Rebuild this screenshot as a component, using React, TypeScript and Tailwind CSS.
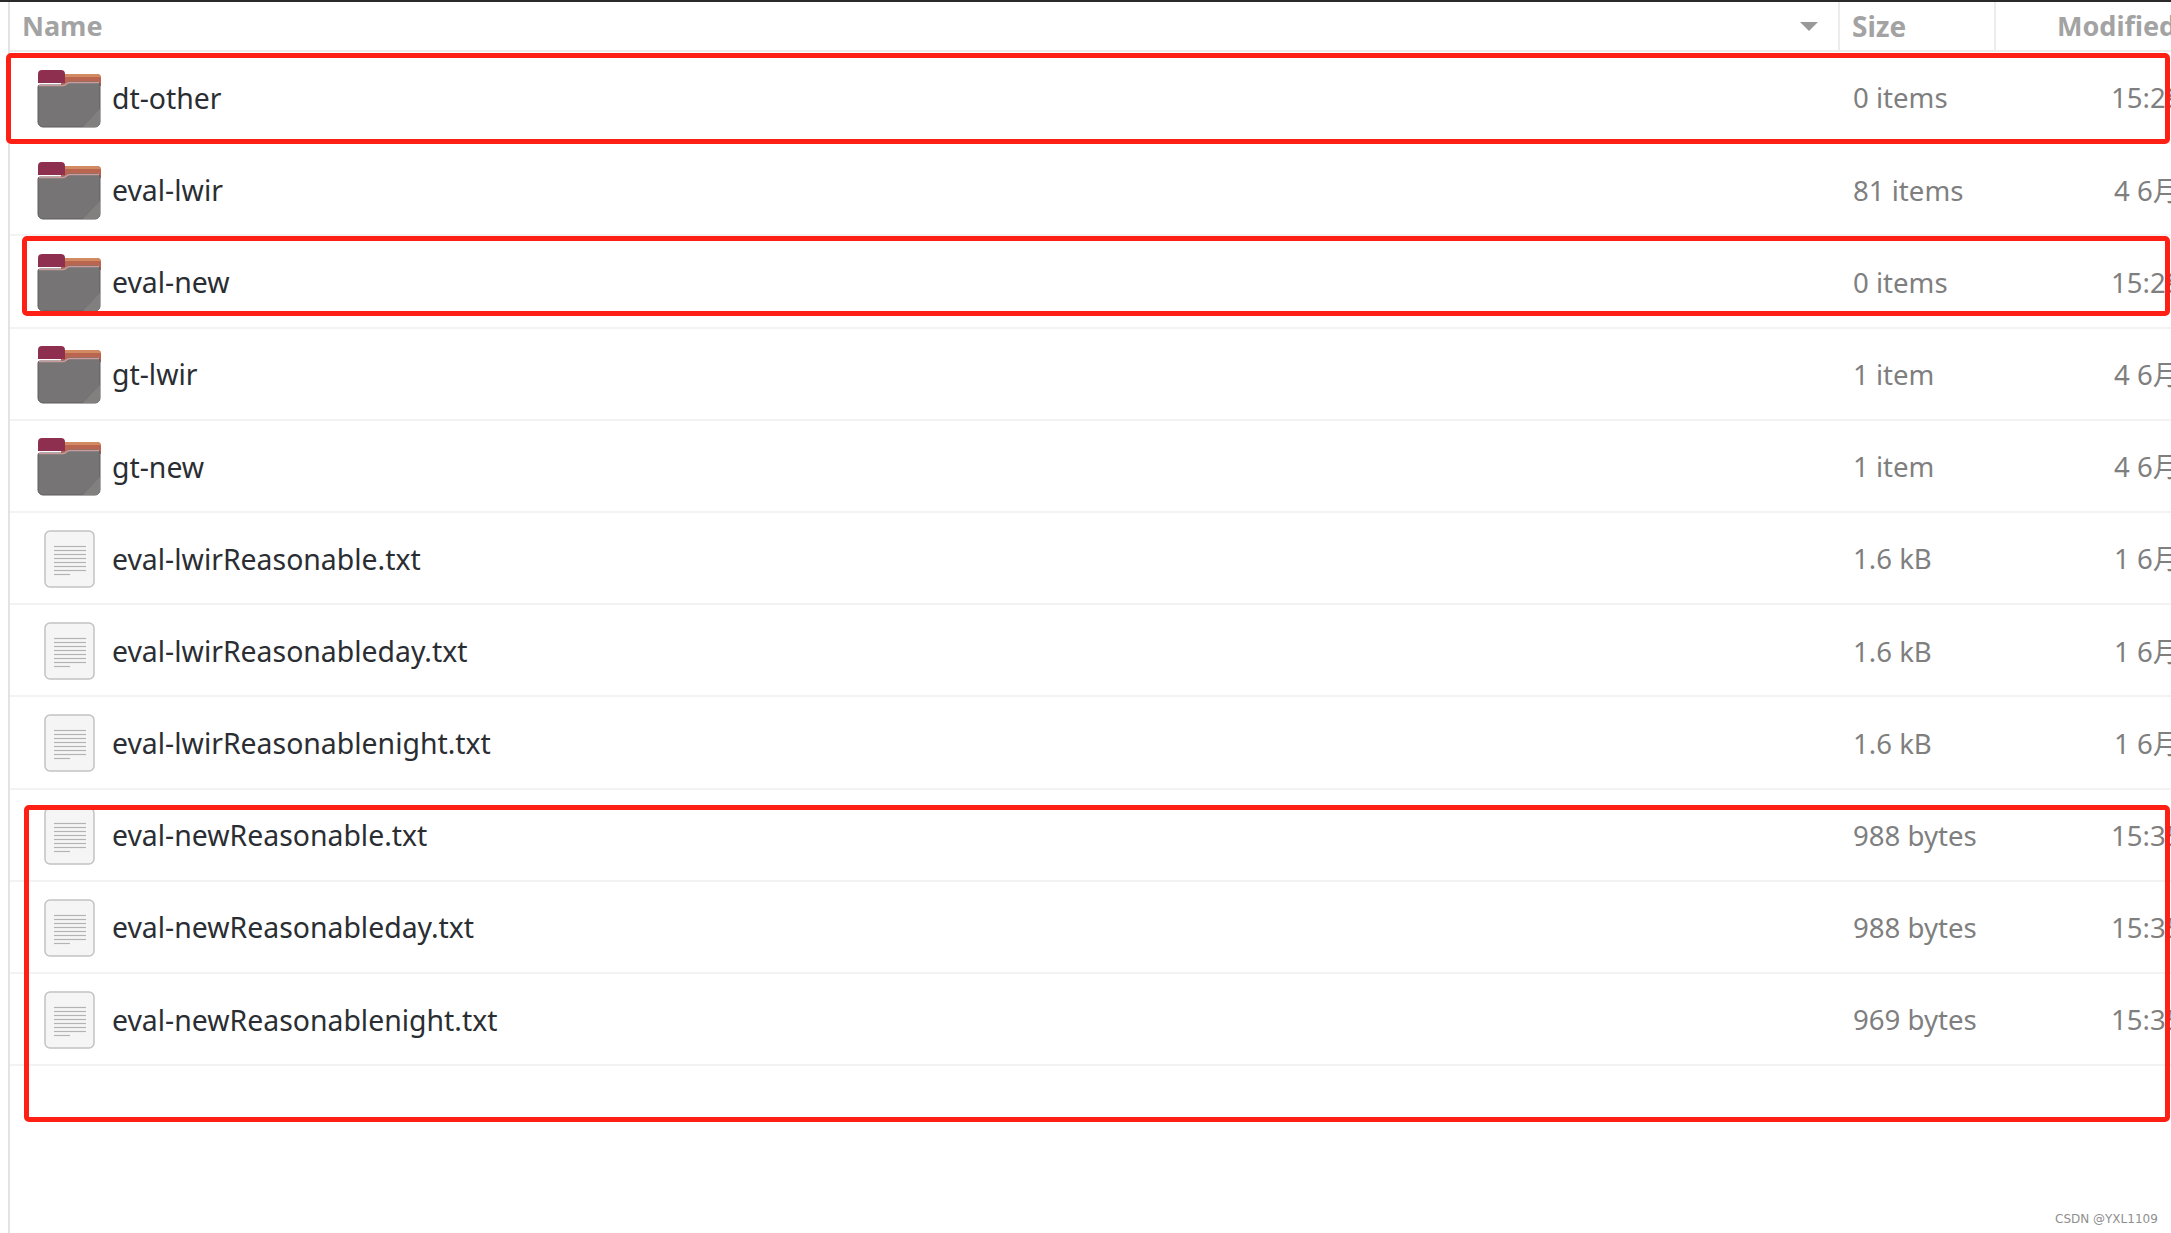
const rows = [
  { name: "dt-other", type: "folder", size: "0 items", modified: "15:28" },
  { name: "eval-lwir", type: "folder", size: "81 items", modified: "4 6月" },
  { name: "eval-new", type: "folder", size: "0 items", modified: "15:28" },
  { name: "gt-lwir", type: "folder", size: "1 item", modified: "4 6月" },
  { name: "gt-new", type: "folder", size: "1 item", modified: "4 6月" },
  { name: "eval-lwirReasonable.txt", type: "file", size: "1.6 kB", modified: "1 6月" },
  { name: "eval-lwirReasonableday.txt", type: "file", size: "1.6 kB", modified: "1 6月" },
  { name: "eval-lwirReasonablenight.txt", type: "file", size: "1.6 kB", modified: "1 6月" },
  { name: "eval-newReasonable.txt", type: "file", size: "988 bytes", modified: "15:35" },
  { name: "eval-newReasonableday.txt", type: "file", size: "988 bytes", modified: "15:35" },
  { name: "eval-newReasonablenight.txt", type: "file", size: "969 bytes", modified: "15:35" },
];

const FolderIcon = () => (
  <svg width="65" height="59" viewBox="0 0 65 59" className="shrink-0">
    <path d="M24 5h36a4 4 0 0 1 4 4v8H24z" fill="#b9654f" />
    <path d="M24 5h36a4 4 0 0 1 4 3H24z" fill="#d18a62" />
    <path d="M1 18V5a4 4 0 0 1 4-4h19a4 4 0 0 1 4 4v9H1z" fill="#8f2f4f" />
    <path d="M1 18a2 2 0 0 1 2-2h23c2 0 3-1 4-2 1-1 2-1 3-1h27a3 3 0 0 1 3 3v37a5 5 0 0 1-5 5H6a5 5 0 0 1-5-5z" fill="#767474" stroke="#5f5d5d" strokeWidth="1" />
    <path d="M2 16.500h24c2 0 3-1 4-2 1-1 2-1 3-1h29" fill="none" stroke="#c99a9c" strokeWidth="1.5" />
    <path d="M63 40v13a5 5 0 0 1-5 5H46z" fill="#827f7f" />
  </svg>
);

const FileIcon = () => (
  <svg width="51" height="58" viewBox="0 0 51 58" className="mx-[7px] shrink-0">
    <rect x="1" y="1" width="49" height="56" rx="5" fill="#f6f5f6" stroke="#c4c2c3" strokeWidth="1.5" />
    <g stroke="#b4b3b4" strokeWidth="1.2">
      <path d="M10 16.500h32" />
      <path d="M10 20.500h32" />
      <path d="M10 24.500h32" />
      <path d="M10 28.500h32" />
      <path d="M10 32.500h32" />
      <path d="M10 36.500h32" />
      <path d="M10 40.500h32" />
      <path d="M10 44.500h16" />
    </g>
  </svg>
);

export default function App() {
  return (
    <div className="relative h-[1233px] w-[2171px] overflow-hidden bg-white font-['Noto_Sans',sans-serif]">
      <div className="h-[2px] bg-[#2a2a2a]" />
      <div className="ml-2 h-[1231px] border-l-2 border-[#e4e2e3]">
        <div className="flex h-[50px] border-b-2 border-[#ececec] text-[27px] font-bold text-[#a3a3a3]">
          <div className="flex w-[1828px] items-center justify-between pl-3 pr-[20px]">
            <span>Name</span>
            <div className="h-0 w-0 border-x-[9px] border-t-[9px] border-x-transparent border-t-[#999999]" />
          </div>
          <div className="flex w-[158px] items-center border-x-2 border-[#ececec] pl-3 text-[28px]">Size</div>
          <div className="flex flex-1 items-center overflow-hidden whitespace-nowrap pl-[61px]">Modified</div>
        </div>
        {rows.map((row) => (
          <div key={row.name} className="flex h-[92.2px] items-center border-b-2 border-[#f4f3f3]">
            <div className="flex w-[1828px] items-center pl-[27px] pt-[2px]">
              {row.type === "folder" ? <FolderIcon /> : <FileIcon />}
              <span className="ml-[10px] text-[28.4px] text-[#2a2e33]">{row.name}</span>
            </div>
            <div className="w-[158px] pl-[15px] pt-[2px] text-[27.6px] text-[#7f7f7f]">{row.size}</div>
            <div
              className={
                row.modified.includes("月")
                  ? "flex-1 overflow-hidden whitespace-nowrap pl-[118px] pt-[2px] text-[27.6px] text-[#7f7f7f]"
                  : "flex-1 overflow-hidden whitespace-nowrap pl-[115px] pt-[2px] text-[27.6px] text-[#7f7f7f]"
              }
            >
              <span className="font-['Noto_Sans','Noto_Sans_CJK_SC',sans-serif]">{row.modified}</span>
            </div>
          </div>
        ))}
      </div>
      {/* red annotation boxes drawn on top of the list */}
      <div className="absolute left-[6px] top-[53px] h-[91px] w-[2164px] rounded-[5px] border-[5px] border-[#ff2015]" />
      <div className="absolute left-[22px] top-[236px] h-[80px] w-[2148px] rounded-[5px] border-[5px] border-[#ff2015]" />
      <div className="absolute left-[24px] top-[805px] h-[317px] w-[2146px] rounded-[5px] border-[5px] border-[#ff2015]" />
      <div className="absolute left-[2055px] top-[1210px] font-['DejaVu_Sans',sans-serif] text-[12px] text-[#8f8f8f]">CSDN @YXL1109</div>
    </div>
  );
}
